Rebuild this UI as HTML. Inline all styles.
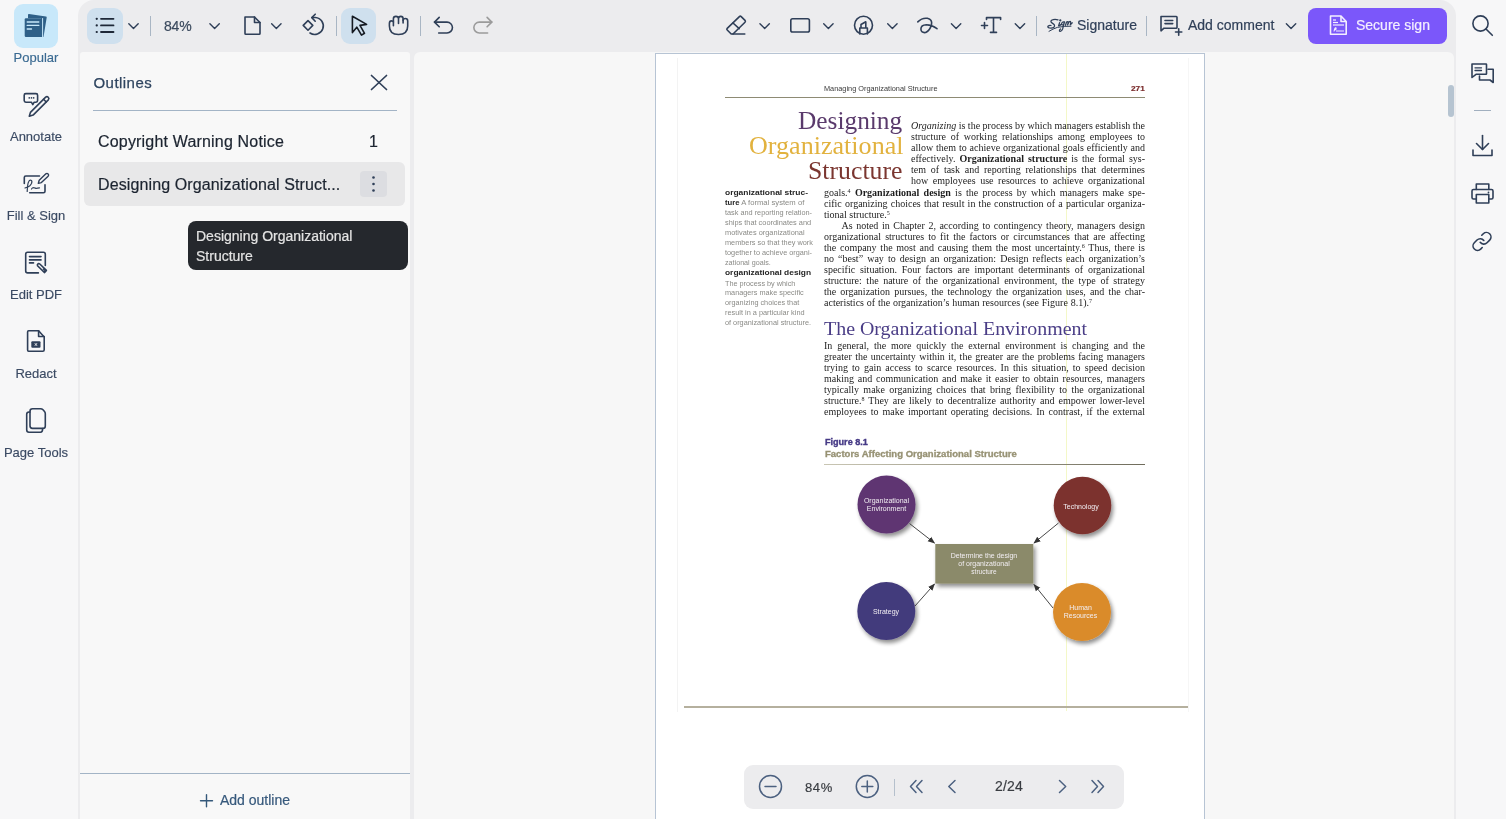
<!DOCTYPE html>
<html><head><meta charset="utf-8">
<style>
*{box-sizing:border-box;margin:0;padding:0}
html,body{width:1506px;height:819px;overflow:hidden;background:#f7f7f8;font-family:"Liberation Sans",sans-serif}
.abs{position:absolute}
#container{position:absolute;left:78px;top:0;width:1378px;height:819px;background:#ececee;border-radius:16px 16px 0 0}
#panel{position:absolute;left:80px;top:52px;width:330px;height:767px;background:#f8f8f8;border-radius:3px 3px 0 0}
#main{position:absolute;left:414px;top:52px;width:1040px;height:767px;background:#f7f7f7;border-radius:6px 6px 0 0;overflow:hidden}
.lbl{position:absolute;left:0;width:72px;text-align:center;font-size:13px;color:#3b4a63;white-space:nowrap}
svg{position:absolute;overflow:visible}
.ic{fill:none;stroke:#2f3f58;stroke-width:1.6;stroke-linecap:round;stroke-linejoin:round}
.div{position:absolute;width:1px;background:#a9b6c4}
.chev{fill:none;stroke:#2f3f58;stroke-width:1.4;stroke-linecap:round;stroke-linejoin:round}
.ui{position:absolute;white-space:nowrap;-webkit-text-stroke-width:0.2px}
.lbl{-webkit-text-stroke-width:0.15px}
</style></head><body><div id="wrap" style="position:absolute;left:0;top:0;width:1506px;height:819px;will-change:transform">

<!-- left sidebar -->
<div class="abs" style="left:14px;top:4px;width:44px;height:44px;background:#c8e8fa;border-radius:9px"></div>
<div class="lbl" style="top:50px;color:#3a6a92">Popular</div>
<div class="lbl" style="top:129px">Annotate</div>
<div class="lbl" style="top:208px">Fill &amp; Sign</div>
<div class="lbl" style="top:287px">Edit PDF</div>
<div class="lbl" style="top:366px">Redact</div>
<div class="lbl" style="top:445px">Page Tools</div>


<!-- left sidebar icons -->
<svg style="left:0;top:0" width="80" height="480" viewBox="0 0 80 480">
 <g fill="#2f6088"><path d="M28 14.6 Q28.3 14 29 14.1 L46 16.6 Q46.8 16.8 46.7 17.6 L43.6 36.5 Q43.4 37 42.8 37 L41 37 V18.2 H28 Z"/><rect x="24.7" y="18.2" width="17.4" height="18.7" rx="1.2"/></g>
 <g stroke="#c8e8fa" stroke-width="1.3" stroke-linecap="round"><line x1="27.2" y1="22" x2="38.8" y2="22"/><line x1="27.2" y1="25.4" x2="38.8" y2="25.4"/><line x1="27.2" y1="29" x2="31.5" y2="29"/><line x1="42.6" y1="18.5" x2="42.6" y2="36.8" stroke-width="1"/></g>
 <g class="ic" stroke-width="1.5">
  <!-- annotate -->
  <g stroke-width="1.6"><line x1="29.2" y1="97.9" x2="29.3" y2="97.9"/><line x1="31.4" y1="97.9" x2="31.5" y2="97.9"/><line x1="33.6" y1="97.9" x2="33.7" y2="97.9"/></g>
  <path d="M25.8 93.6 H36 Q37.6 93.6 37.6 95.2 V100.6 Q37.6 102.2 36 102.2 H34.2 L32.8 104.6 L31.4 102.2 H25.8 Q24.2 102.2 24.2 100.6 V95.2 Q24.2 93.6 25.8 93.6 Z"/>
  <path d="M29.3 116.2 L33.11 115.07 L48.34 99.84 A1.9 1.9 0 0 0 45.66 97.16 L30.43 112.39 Z"/><line x1="43.54" y1="99.28" x2="46.22" y2="101.96"/>
  <!-- fill&sign -->
  <path d="M24.3 183.5 V177.5 Q24.3 176 25.8 176 H39.5"/><path d="M45 184.7 V191.2 Q45 192.7 43.5 192.7 H29.7"/>
  <path d="M38.3 183.4 L41.41 182.61 L48.11 176.15 A1.6 1.6 0 0 0 45.89 173.85 L39.19 180.31 Z" stroke-width="1.4"/>
  <path d="M25 188 Q28 186.8 29 186.5 M27.2 191.5 Q27.5 184 28.5 182 Q29.5 179.8 31 180.3 Q32.5 181 31.5 183.5 Q30.3 186 28 187 M31.5 189 Q33 187 34 188 Q35 187.5 36 188.5 Q37.5 187.8 39.5 187.8" stroke-width="1.2"/>
  <!-- edit pdf -->
  <path d="M45.3 265.4 V254.2 Q45.3 252.3 43.4 252.3 H27.6 Q25.7 252.3 25.7 254.2 V271 Q25.7 272.9 27.6 272.9 H38.4"/>
  <line x1="29.5" y1="256.6" x2="41" y2="256.6"/><line x1="29.5" y1="259.9" x2="41" y2="259.9"/><line x1="29.5" y1="262.9" x2="33.5" y2="262.9"/>
  <path d="M37.5 265.7 Q37 264.5 38 263.8 Q39 263.3 39.8 264 L46.4 270.4 L44.6 272.6 Z"/><line x1="43.5" y1="269" x2="45" y2="270.5"/>
  <!-- redact -->
  <path d="M28.6 330.8 H38.6 L44.2 337 V349.8 Q44.2 351.2 42.8 351.2 H28.6 Q27.6 351.2 27.6 350 V332 Q27.6 330.8 28.6 330.8 Z"/><path d="M38.6 330.8 V336.5 H44.2"/>
  <!-- page tools -->
  <path d="M30 425.8 V411.2 Q30 408.7 32.5 408.7 H40.5 Q42 408.7 43 409.8 L44.5 411.5 Q45.3 412.5 45.3 413.8 V426 Q45.3 428.4 43 428.4 H32.4 Q30 428.4 30 425.8 Z"/>
  <path d="M30 412 H29 Q26.7 412 26.7 414.3 V429.8 Q26.7 432.2 29 432.2 H40.5 Q42.6 432.2 42.6 429 V428.5"/>
 </g>
 <rect x="31.3" y="341.3" width="9.2" height="6.4" rx="1" fill="#2f3f58"/>
 <path d="M34.8 343.2 L37 345.8 M37 343.2 L34.8 345.8" stroke="#f7f7f8" stroke-width="0.9"/>
</svg>

<div id="container"></div>
<div id="panel"></div>
<div id="main"></div>



<!-- document page -->
<div class="abs" style="left:655px;top:53px;width:550px;height:800px;background:#fff;border:1px solid #b7c4d4"></div>
<div class="abs" style="left:677px;top:58px;width:1px;height:654px;background:#f3f3f3"></div>
<div class="abs" style="left:1188px;top:58px;width:1px;height:654px;background:#f6f6f6"></div>
<div class="abs" style="left:1066px;top:54px;width:1px;height:657px;background:#f4f8c8"></div>
<div class="abs" style="left:725px;top:97px;width:420px;height:1px;background:#8e8b74"></div>
<div class="abs" style="left:824px;top:464px;width:321px;height:1.4px;background:linear-gradient(90deg,#c9c6b4,#6f6c5c)"></div>
<div class="abs" style="left:684px;top:706px;width:504px;height:1.6px;background:#b5b09e"></div>
<style>.pl{position:absolute;white-space:nowrap;transform-origin:0 50%}.pl sup{font-size:60%;vertical-align:0;position:relative;top:-0.45em}</style>
<div class='pl' style="left:824.30px;top:85.45px;font-family:'Liberation Sans';font-size:7.5px;line-height:7.5px;color:#3a3a3a;;transform:scaleX(0.9792)">Managing Organizational Structure</div>
<div class='pl' style="left:1130.80px;top:85.03px;font-family:'Liberation Sans';font-size:8px;line-height:8px;color:#7a2b2b;font-weight:bold;-webkit-text-stroke:0.2px #7a2b2b;transform:scaleX(1.0330)">271</div>
<div class='pl' style="left:797.90px;top:107.64px;font-family:'Liberation Serif';font-size:25.5px;line-height:25.5px;color:#5a3a6c;;transform:scaleX(0.9940)">Designing</div>
<div class='pl' style="left:749.00px;top:132.64px;font-family:'Liberation Serif';font-size:25.5px;line-height:25.5px;color:#e2b23e;;transform:scaleX(1.0228)">Organizational</div>
<div class='pl' style="left:807.80px;top:157.84px;font-family:'Liberation Serif';font-size:25.5px;line-height:25.5px;color:#7b3630;;transform:scaleX(1.0109)">Structure</div>
<div class='pl' style="left:911.00px;top:121.32px;font-family:'Liberation Serif';font-size:10px;line-height:10px;color:#1d1d1d;;word-spacing:-0.006px"><i>Organizing</i> is the process by which managers establish the</div>
<div class='pl' style="left:911.00px;top:132.35px;font-family:'Liberation Serif';font-size:10px;line-height:10px;color:#1d1d1d;;word-spacing:2.247px">structure of working relationships among employees to</div>
<div class='pl' style="left:911.00px;top:143.38px;font-family:'Liberation Serif';font-size:10px;line-height:10px;color:#1d1d1d;;word-spacing:0.357px">allow them to achieve organizational goals efficiently and</div>
<div class='pl' style="left:911.00px;top:154.41px;font-family:'Liberation Serif';font-size:10px;line-height:10px;color:#1d1d1d;;word-spacing:1.536px">effectively. <b>Organizational structure</b> is the formal sys-</div>
<div class='pl' style="left:911.00px;top:165.44px;font-family:'Liberation Serif';font-size:10px;line-height:10px;color:#1d1d1d;;word-spacing:2.286px">tem of task and reporting relationships that determines</div>
<div class='pl' style="left:911.00px;top:176.47px;font-family:'Liberation Serif';font-size:10px;line-height:10px;color:#1d1d1d;;word-spacing:2.099px">how employees use resources to achieve organizational</div>
<div class='pl' style="left:824.00px;top:187.50px;font-family:'Liberation Serif';font-size:10px;line-height:10px;color:#1d1d1d;;word-spacing:1.775px">goals.<sup>4</sup> <b>Organizational design</b> is the process by which managers make spe-</div>
<div class='pl' style="left:824.00px;top:198.53px;font-family:'Liberation Serif';font-size:10px;line-height:10px;color:#1d1d1d;;word-spacing:0.716px">cific organizing choices that result in the construction of a particular organiza-</div>
<div class='pl' style="left:824.00px;top:209.56px;font-family:'Liberation Serif';font-size:10px;line-height:10px;color:#1d1d1d;">tional structure.<sup>5</sup></div>
<div class='pl' style="left:841.50px;top:220.59px;font-family:'Liberation Serif';font-size:10px;line-height:10px;color:#1d1d1d;;word-spacing:1.033px">As noted in Chapter 2, according to contingency theory, managers design</div>
<div class='pl' style="left:824.00px;top:231.62px;font-family:'Liberation Serif';font-size:10px;line-height:10px;color:#1d1d1d;;word-spacing:1.648px">organizational structures to fit the factors or circumstances that are affecting</div>
<div class='pl' style="left:824.00px;top:242.65px;font-family:'Liberation Serif';font-size:10px;line-height:10px;color:#1d1d1d;;word-spacing:1.250px">the company the most and causing them the most uncertainty.<sup>6</sup> Thus, there is</div>
<div class='pl' style="left:824.00px;top:253.68px;font-family:'Liberation Serif';font-size:10px;line-height:10px;color:#1d1d1d;;word-spacing:1.591px">no “best” way to design an organization: Design reflects each organization’s</div>
<div class='pl' style="left:824.00px;top:264.71px;font-family:'Liberation Serif';font-size:10px;line-height:10px;color:#1d1d1d;;word-spacing:2.346px">specific situation. Four factors are important determinants of organizational</div>
<div class='pl' style="left:824.00px;top:275.75px;font-family:'Liberation Serif';font-size:10px;line-height:10px;color:#1d1d1d;;word-spacing:2.100px">structure: the nature of the organizational environment, the type of strategy</div>
<div class='pl' style="left:824.00px;top:286.77px;font-family:'Liberation Serif';font-size:10px;line-height:10px;color:#1d1d1d;;word-spacing:1.555px">the organization pursues, the technology the organization uses, and the char-</div>
<div class='pl' style="left:824.00px;top:297.80px;font-family:'Liberation Serif';font-size:10px;line-height:10px;color:#1d1d1d;;word-spacing:0.311px">acteristics of the organization’s human resources (see Figure 8.1).<sup>7</sup></div>
<div class='pl' style="left:824.00px;top:318.57px;font-family:'Liberation Serif';font-size:19.5px;line-height:19.5px;color:#4a3d86;;transform:scaleX(1.0217)">The Organizational Environment</div>
<div class='pl' style="left:824.00px;top:341.02px;font-family:'Liberation Serif';font-size:10px;line-height:10px;color:#1d1d1d;;word-spacing:2.321px">In general, the more quickly the external environment is changing and the</div>
<div class='pl' style="left:824.00px;top:352.00px;font-family:'Liberation Serif';font-size:10px;line-height:10px;color:#1d1d1d;;word-spacing:0.911px">greater the uncertainty within it, the greater are the problems facing managers</div>
<div class='pl' style="left:824.00px;top:362.96px;font-family:'Liberation Serif';font-size:10px;line-height:10px;color:#1d1d1d;;word-spacing:1.664px">trying to gain access to scarce resources. In this situation, to speed decision</div>
<div class='pl' style="left:824.00px;top:373.94px;font-family:'Liberation Serif';font-size:10px;line-height:10px;color:#1d1d1d;;word-spacing:1.303px">making and communication and make it easier to obtain resources, managers</div>
<div class='pl' style="left:824.00px;top:384.90px;font-family:'Liberation Serif';font-size:10px;line-height:10px;color:#1d1d1d;;word-spacing:1.858px">typically make organizing choices that bring flexibility to the organizational</div>
<div class='pl' style="left:824.00px;top:395.88px;font-family:'Liberation Serif';font-size:10px;line-height:10px;color:#1d1d1d;;word-spacing:1.498px">structure.<sup>8</sup> They are likely to decentralize authority and empower lower-level</div>
<div class='pl' style="left:824.00px;top:406.84px;font-family:'Liberation Serif';font-size:10px;line-height:10px;color:#1d1d1d;;word-spacing:1.442px">employees to make important operating decisions. In contrast, if the external</div>
<div class='pl' style="left:824.50px;top:438.19px;font-family:'Liberation Sans';font-size:8.4px;line-height:8.4px;color:#463a86;font-weight:bold;-webkit-text-stroke:0.35px #463a86;transform:scaleX(1.0818)">Figure 8.1</div>
<div class='pl' style="left:824.50px;top:449.72px;font-family:'Liberation Sans';font-size:8.6px;line-height:8.6px;color:#979274;font-weight:bold;-webkit-text-stroke:0.3px #979274;transform:scaleX(1.1086)">Factors Affecting Organizational Structure</div>
<div class='pl' style="left:724.60px;top:188.97px;font-family:'Liberation Sans';font-size:7.6px;line-height:7.6px;color:#8a8a86;;transform:scaleX(1.1113)"><b style='color:#262626'>organizational struc-</b></div>
<div class='pl' style="left:724.60px;top:198.67px;font-family:'Liberation Sans';font-size:7.6px;line-height:7.6px;color:#8a8a86;;transform:scaleX(1.0100)"><b style='color:#262626'>ture</b> A formal system of</div>
<div class='pl' style="left:724.60px;top:208.67px;font-family:'Liberation Sans';font-size:7.6px;line-height:7.6px;color:#8a8a86;;transform:scaleX(0.9630)">task and reporting relation-</div>
<div class='pl' style="left:724.60px;top:218.77px;font-family:'Liberation Sans';font-size:7.6px;line-height:7.6px;color:#8a8a86;;transform:scaleX(0.9712)">ships that coordinates and</div>
<div class='pl' style="left:724.60px;top:228.87px;font-family:'Liberation Sans';font-size:7.6px;line-height:7.6px;color:#8a8a86;;transform:scaleX(0.9720)">motivates organizational</div>
<div class='pl' style="left:724.60px;top:239.27px;font-family:'Liberation Sans';font-size:7.6px;line-height:7.6px;color:#8a8a86;;transform:scaleX(0.9641)">members so that they work</div>
<div class='pl' style="left:724.60px;top:248.97px;font-family:'Liberation Sans';font-size:7.6px;line-height:7.6px;color:#8a8a86;;transform:scaleX(0.9630)">together to achieve organi-</div>
<div class='pl' style="left:724.60px;top:259.47px;font-family:'Liberation Sans';font-size:7.6px;line-height:7.6px;color:#8a8a86;;transform:scaleX(0.9431)">zational goals.</div>
<div class='pl' style="left:724.60px;top:269.17px;font-family:'Liberation Sans';font-size:7.6px;line-height:7.6px;color:#8a8a86;;transform:scaleX(1.1030)"><b style='color:#262626'>organizational design</b></div>
<div class='pl' style="left:724.60px;top:279.57px;font-family:'Liberation Sans';font-size:7.6px;line-height:7.6px;color:#8a8a86;;transform:scaleX(0.9584)">The process by which</div>
<div class='pl' style="left:724.60px;top:289.27px;font-family:'Liberation Sans';font-size:7.6px;line-height:7.6px;color:#8a8a86;;transform:scaleX(0.9610)">managers make specific</div>
<div class='pl' style="left:724.60px;top:299.27px;font-family:'Liberation Sans';font-size:7.6px;line-height:7.6px;color:#8a8a86;;transform:scaleX(0.9551)">organizing choices that</div>
<div class='pl' style="left:724.60px;top:309.47px;font-family:'Liberation Sans';font-size:7.6px;line-height:7.6px;color:#8a8a86;;transform:scaleX(0.9670)">result in a particular kind</div>
<div class='pl' style="left:724.60px;top:319.27px;font-family:'Liberation Sans';font-size:7.6px;line-height:7.6px;color:#8a8a86;;transform:scaleX(0.9620)">of organizational structure.</div>
<!-- diagram -->
<svg style="left:820px;top:465px" width="320" height="190" viewBox="820 465 320 190">
 <defs>
  <filter id="sh" x="-30%" y="-30%" width="160%" height="160%"><feGaussianBlur in="SourceAlpha" stdDeviation="2"/><feOffset dx="2" dy="3"/><feComponentTransfer><feFuncA type="linear" slope="0.45"/></feComponentTransfer><feMerge><feMergeNode/><feMergeNode in="SourceGraphic"/></feMerge></filter>
  <marker id="ah" viewBox="0 0 10 10" refX="9" refY="5" markerWidth="8" markerHeight="8" orient="auto"><path d="M0 1 L10 5 L0 9 Z" fill="#333"/></marker>
 </defs>
 <g filter="url(#sh)">
  <circle cx="886.5" cy="504.5" r="29" fill="#5e3672"/>
  <circle cx="1082.5" cy="505.5" r="28.8" fill="#7b302d"/>
  <circle cx="886.3" cy="611" r="29" fill="#433a7b"/>
  <circle cx="1082" cy="612" r="29" fill="#da8b2b"/>
  <rect x="935.3" y="544" width="98" height="39.6" fill="#8b8a6b"/>
 </g>
 <g stroke="#333" stroke-width="0.9" marker-end="url(#ah)">
  <line x1="909.6" y1="523.6" x2="934.5" y2="543"/>
  <line x1="1058.5" y1="523" x2="1034" y2="543"/>
  <line x1="915" y1="606" x2="934.5" y2="584"/>
  <line x1="1053" y1="608" x2="1034" y2="584.5"/>
 </g>
 <g font-family="Liberation Sans" font-size="7" fill="#f2eef2" text-anchor="middle">
  <text x="886.5" y="503">Organizational</text><text x="886.5" y="511">Environment</text>
  <text x="1081" y="508.5">Technology</text>
  <text x="886" y="613.5">Strategy</text>
  <text x="1080.5" y="609.5">Human</text><text x="1080.5" y="618">Resources</text>
  <text x="984" y="558">Determine the design</text><text x="984" y="566">of organizational</text><text x="984" y="574" font-size="6.5">structure</text>
 </g>
</svg>
<!-- pagination bar -->
<div class="abs" style="left:744px;top:765px;width:380px;height:44px;background:#ececee;border-radius:9px"></div>
<div class="ui" style="left:805px;top:779.7px;font-size:13px;color:#3a3d42;letter-spacing:0.6px">84%</div>
<div class="ui" style="left:995px;top:778px;font-size:14px;color:#3a3d42;letter-spacing:0.2px">2/24</div>
<svg style="left:740px;top:760px" width="390" height="55" viewBox="740 760 390 55">
 <g fill="none" stroke="#4c6180" stroke-width="1.5" stroke-linecap="round" stroke-linejoin="round">
  <circle cx="770.5" cy="786.5" r="11"/><line x1="765" y1="786.5" x2="776" y2="786.5"/>
  <circle cx="867.3" cy="786.5" r="11"/><line x1="861.8" y1="786.5" x2="872.8" y2="786.5"/><line x1="867.3" y1="781" x2="867.3" y2="792"/>
  <polyline points="916,780.5 910.5,786.5 916,792.5"/><polyline points="922,780.5 916.5,786.5 922,792.5"/>
  <polyline points="955,780.5 948.8,786.5 955,792.5"/>
  <polyline points="1059.5,780.5 1065.7,786.5 1059.5,792.5"/>
  <polyline points="1092,780.5 1097.5,786.5 1092,792.5"/><polyline points="1098,780.5 1103.5,786.5 1098,792.5"/>
 </g>
 <line x1="894.5" y1="779" x2="894.5" y2="796" stroke="#b5c0cc" stroke-width="1"/>
</svg>

<!-- toolbar -->
<div class="abs" style="left:87px;top:8px;width:36px;height:36px;background:#cfe0ee;border-radius:9px"></div>
<div class="abs" style="left:341px;top:8px;width:35px;height:36px;background:#cfe0ee;border-radius:9px"></div>
<div class="ui" style="left:164px;top:18px;font-size:14px;color:#3b4a5e;letter-spacing:-0.2px">84%</div>
<div class="ui" style="left:1077px;top:17px;font-size:14px;color:#2f3f58">Signature</div>
<div class="ui" style="left:1188px;top:17px;font-size:14px;color:#2f3f58">Add comment</div>
<div class="abs" style="left:1308px;top:8px;width:139px;height:36px;background:#7b57fa;border-radius:8px"></div>
<div class="ui" style="left:1356px;top:17px;font-size:14px;color:#f4efff">Secure sign</div>
<svg style="left:0;top:0" width="1506" height="60" viewBox="0 0 1506 60">
 <g stroke="#a9b6c4" stroke-width="1"><line x1="150.5" y1="16" x2="150.5" y2="36"/><line x1="336.5" y1="16" x2="336.5" y2="36"/><line x1="420.5" y1="16" x2="420.5" y2="36"/><line x1="1036.5" y1="16" x2="1036.5" y2="36"/><line x1="1146.5" y1="16" x2="1146.5" y2="36"/></g>
 <!-- list icon -->
 <g stroke="#1e2838" stroke-width="2.2" stroke-linecap="round"><line x1="96.7" y1="18.8" x2="96.8" y2="18.8"/><line x1="96.7" y1="25.4" x2="96.8" y2="25.4"/><line x1="96.7" y1="32" x2="96.8" y2="32"/></g>
 <g stroke="#1e2838" stroke-width="1.8" stroke-linecap="round"><line x1="101" y1="18.8" x2="113.5" y2="18.8"/><line x1="101" y1="25.4" x2="113.5" y2="25.4"/><line x1="101" y1="32" x2="113.5" y2="32"/></g>
 <g class="chev"><polyline points="128.80,23.7 133.50,28.4 138.20,23.7"/><polyline points="209.90,23.7 214.60,28.4 219.30,23.7"/><polyline points="271.65,23.7 276.35,28.4 281.05,23.7"/><polyline points="759.95,23.7 764.65,28.4 769.35,23.7"/><polyline points="823.70,23.7 828.40,28.4 833.10,23.7"/><polyline points="887.70,23.7 892.40,28.4 897.10,23.7"/><polyline points="951.40,23.7 956.10,28.4 960.80,23.7"/><polyline points="1015.25,23.7 1019.95,28.4 1024.65,23.7"/><polyline points="1286.35,23.7 1291.05,28.4 1295.75,23.7"/></g>
 <g class="ic">
  <!-- page -->
  <path d="M245 17 H254.5 L260 22.5 V33.5 Q260 34.3 259.2 34.3 H245.8 Q245 34.3 245 33.5 Z"/><path d="M254.5 17 V22.5 H260"/>
  <!-- rotate -->
  <path d="M308 20.6 L312.8 25.4 L308 30.2 L303.2 25.4 Z"/>
  <path d="M312 17.5 H315.4 A8.5 8.5 0 1 1 310 33"/><polyline points="315.2,14.2 311.8,17.6 315.2,21.2"/>
  <!-- hand -->
  <path d="M393.4 21.8 Q393.2 20.9 391.5 20.9 Q389.4 20.9 389.4 23.5 V26 Q389.4 34.5 398.5 34.5 Q407.7 34.5 407.7 26 V21 Q407.7 18.5 405.4 18.5 Q403.1 18.5 403.1 20.6"/><path d="M393.4 25.8 V18.8 Q393.4 16.4 395.95 16.4 Q398.5 16.4 398.5 18.8 V23.5 M398.5 18.8 Q398.5 16.4 400.8 16.4 Q403.1 16.4 403.1 18.8 V23"/>
  <!-- undo -->
  <path d="M434.5 22.1 H447 A5.45 5.45 0 0 1 447 33 H438.7"/><polyline points="439.2,17.4 434.5,22.1 439.2,26.8"/>
  <!-- eraser -->
  <path d="M739.4 16.6 Q740.3 15.8 741.2 16.6 L745 20.4 Q745.8 21.3 745 22.2 L733 34 H731.2 L727.2 30 Q726.4 29.2 727.2 28.3 Z"/><line x1="733" y1="23" x2="739.2" y2="28.7"/><line x1="733" y1="34" x2="744.8" y2="34"/>
  <!-- rect -->
  <rect x="790.8" y="18.8" width="18.6" height="13.2" rx="1.8"/>
  <!-- highlighter -->
  <circle cx="863.5" cy="25.3" r="9"/>
  <path d="M859.8 34 V28 H867.4 V34 M861 28 V24.5 L865.8 21.8 V28"/>
  <!-- freehand -->
  <path d="M917.8 21.9 Q922 17.6 927.4 18.3 Q932.5 19.5 931.5 24.5 Q930 30.5 925.7 32.5 Q921 33.2 920.9 29 Q921 25 926.3 24.8 Q932 25 937 28.7"/>
  <!-- +T -->
  <path d="M986.5 17.8 V19.4 M986.5 17.6 H1000.6 V19.4 M993.5 17.6 V32.4 M990.5 32.4 H996.5"/>
  <path d="M981.5 25.5 H987.5 M984.5 22.5 V28.5"/>
  <!-- comment -->
  <path d="M1161 16.5 H1176.3 Q1177 16.5 1177 17.2 V27.5 Q1177 28.2 1176.3 28.2 H1164 L1161 30.8 Z"/><line x1="1165" y1="20.5" x2="1172.7" y2="20.5"/><line x1="1165" y1="23.6" x2="1172.7" y2="23.6"/><path d="M1175.5 32 H1181.8 M1178.7 28.8 V35.2"/>
 </g>
 <!-- redo -->
 <g fill="none" stroke="#9b9b9b" stroke-width="1.6" stroke-linecap="round" stroke-linejoin="round"><path d="M491.8 22.1 H479.3 A5.45 5.45 0 0 0 479.3 33 H487.6"/><polyline points="487.1,17.4 491.8,22.1 487.1,26.8"/></g>
 <!-- cursor -->
 <path d="M352.4 16.3 L366.6 24.4 L360 25.4 L364.5 33.3 L361.5 35.1 L356.8 27.2 L352.4 32.6 Z" fill="none" stroke="#151a22" stroke-width="1.6" stroke-linejoin="round"/>
 <!-- sign -->
 <g fill="none" stroke="#2f3f58" stroke-width="1.25" stroke-linecap="round" stroke-linejoin="round">
  <path d="M1058 19.8 Q1054.5 18.6 1051.6 20.2 Q1049.8 21.8 1052.6 23.4 Q1055.4 25 1054.2 27 Q1052.5 28.5 1049.5 28 Q1047 27.3 1048.2 26 Q1049.5 25 1051 25.5"/>
  <path d="M1049 31.3 Q1053 28.8 1057.3 27.4 Q1064 26 1071 26.2" stroke-width="1"/>
  <path d="M1059.6 22.6 L1058.6 25.8 Q1059.5 26 1061 24.5"/><circle cx="1060.3" cy="20.4" r="0.5" fill="#2f3f58"/>
  <path d="M1064.3 22 Q1062 21.3 1061.5 24 Q1061.6 25.6 1063.5 24.6 L1064.5 21.8 L1062.6 29 Q1061.5 31.8 1059.8 31.3 Q1058.8 30.5 1060.5 29"/>
  <path d="M1065.5 25.3 L1066.5 22 Q1068 21 1068.3 22 L1067.6 25 Q1069 21 1070.5 21.5 Q1071 22 1070.3 24.8 L1072.3 22.8"/>
 </g>
 <!-- secure sign icon -->
 <g fill="none" stroke="#f4efff" stroke-width="1.6" stroke-linejoin="round"><path d="M1330.5 16 H1341 L1346.2 21.5 V34.2 H1330.5 Z"/><path d="M1341 16 V21.5 H1346.2" /><line x1="1333" y1="20" x2="1336" y2="20" stroke-width="1.2"/><line x1="1333" y1="22.5" x2="1338" y2="22.5" stroke-width="1.2"/><line x1="1333" y1="25" x2="1344" y2="25" stroke-width="1.2"/><path d="M1334 31.5 Q1335 27 1336 28 Q1336.5 30 1334.5 30 M1336 31 H1344" stroke-width="1.1"/></g>
</svg>


<!-- outline panel -->
<div class="ui" style="left:93.5px;top:74px;font-size:15px;color:#2f4560;letter-spacing:0.45px;-webkit-text-stroke:0.25px #2f4560">Outlines</div>
<div class="abs" style="left:93px;top:110px;width:304px;height:1px;background:#a3b4c6"></div>
<div class="ui" style="left:98px;top:132.5px;font-size:16px;color:#1c2430;letter-spacing:0.18px">Copyright Warning Notice</div>
<div class="ui" style="left:369px;top:132.5px;font-size:16px;color:#1c2430">1</div>
<div class="abs" style="left:84px;top:162px;width:321px;height:44px;background:#e8e8e9;border-radius:6px"></div>
<div class="ui" style="left:98px;top:176px;font-size:16px;color:#1c2430;letter-spacing:0.12px">Designing Organizational Struct...</div>
<div class="abs" style="left:360px;top:171px;width:27px;height:26px;background:#dcdde1;border-radius:4px"></div>
<div class="abs" style="left:188px;top:221px;width:220px;height:49px;background:#25282d;border-radius:8px"></div>
<div class="ui" style="left:196px;top:225.5px;font-size:14px;line-height:20px;color:#e4e4e4;white-space:normal;width:200px">Designing Organizational<br>Structure</div>
<div class="abs" style="left:80px;top:773px;width:330px;height:1px;background:#a3b4c6"></div>
<div class="ui" style="left:220px;top:792px;font-size:14px;color:#37597c">Add outline</div>
<svg style="left:0;top:0" width="420" height="819" viewBox="0 0 420 819">
 <g fill="none" stroke="#2f3f58" stroke-width="1.7" stroke-linecap="round"><line x1="371.5" y1="75.5" x2="386.5" y2="89.5"/><line x1="386.5" y1="75.5" x2="371.5" y2="89.5"/></g>
 <g fill="#2f3f58"><circle cx="373.5" cy="177.5" r="1.3"/><circle cx="373.5" cy="184" r="1.3"/><circle cx="373.5" cy="190.5" r="1.3"/></g>
 <g fill="none" stroke="#34587a" stroke-width="1.4" stroke-linecap="round"><line x1="200.5" y1="800.7" x2="212.5" y2="800.7"/><line x1="206.5" y1="794.7" x2="206.5" y2="806.7"/></g>
</svg>
<!-- right sidebar icons -->
<svg style="left:1456px;top:0" width="50" height="260" viewBox="1456 0 50 260">
 <g class="ic" stroke-width="1.6">
  <circle cx="1480.5" cy="23.5" r="7.6"/><line x1="1486" y1="29" x2="1492.3" y2="35.3"/>
  <path d="M1472 64 H1486 Q1486.5 64 1486.5 64.5 V73.8 Q1486.5 74.3 1486 74.3 H1476 L1472 77.5 Z"/>
  <path d="M1488 69.2 H1493.2 V82.5 L1490 80 H1479.5 V76"/>
  <line x1="1475" y1="67.8" x2="1481.5" y2="67.8" stroke-width="1.3"/><line x1="1475" y1="70.5" x2="1481.5" y2="70.5" stroke-width="1.3"/>
  <line x1="1482.5" y1="135.5" x2="1482.5" y2="149.5"/><polyline points="1476.5,143.5 1482.5,149.5 1488.5,143.5"/><path d="M1473 150 V155.5 H1492 V150"/>
  <path d="M1476.3 189.5 V184 H1488.8 V189.5"/><path d="M1476.3 199 H1473.5 Q1472 199 1472 197.5 V191 Q1472 189.5 1473.5 189.5 H1491.5 Q1493 189.5 1493 191 V197.5 Q1493 199 1491.5 199 H1488.8"/><rect x="1476.3" y="194.5" width="12.5" height="8.5"/>
  <g transform="translate(1471.2 230.6) scale(0.9)"><path d="M10 13a5 5 0 0 0 7.54.54l3-3a5 5 0 0 0-7.07-7.07l-1.72 1.71" stroke-width="1.8"/><path d="M14 11a5 5 0 0 0-7.54-.54l-3 3a5 5 0 0 0 7.07 7.07l1.71-1.71" stroke-width="1.8"/></g>
 </g>
 <circle cx="1488.5" cy="192.5" r="0.9" fill="#2f3f58"/>
 <line x1="1474" y1="110.5" x2="1491" y2="110.5" stroke="#a1afbf" stroke-width="1"/>
</svg>
<div class="abs" style="left:1448px;top:85px;width:6px;height:32px;background:#b6c4d1;border-radius:3px"></div>

</div></body></html>
